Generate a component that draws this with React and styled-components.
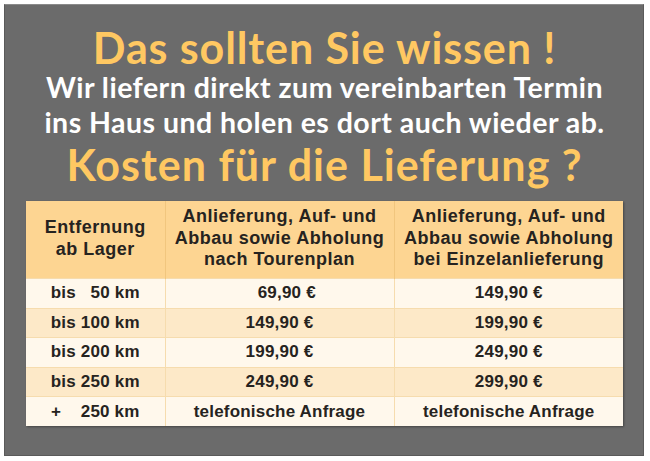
import React from "react";
import styled, { createGlobalStyle } from "styled-components";

const GlobalStyle = createGlobalStyle`
  html, body {
    margin: 0;
    padding: 0;
    background: #ffffff;
  }
`;

const Page = styled.div`
  width: 650px;
  height: 461px;
  padding: 4px 6px 5px 4px;
  box-sizing: border-box;
`;

const Panel = styled.div`
  width: 640px;
  height: 452px;
  box-sizing: border-box;
  background: #6b6b6b;
  border: 1px solid #5a5a5a;
  border-top-color: #8a8a8a;
  display: flex;
  flex-direction: column;
  align-items: center;
  padding: 20px 20px 0 21px;
`;

const Headline = styled.h1`
  margin: 0;
  font-family: Lato, "Open Sans", sans-serif;
  font-weight: 700;
  font-size: ${(p) => p.size}px;
  line-height: ${(p) => p.lh}px;
  letter-spacing: ${(p) => p.ls}px;
  color: ${(p) => (p.white ? "#ffffff" : "#ffc862")};
  text-align: center;
  white-space: nowrap;
`;

const Table = styled.table`
  margin-top: 11px;
  width: 597px;
  border-collapse: collapse;
  table-layout: fixed;
  font-family: "Liberation Sans", Arial, sans-serif;
  font-weight: 700;
  color: #262320;
  box-shadow: 1px 1px 2px rgba(0, 0, 0, 0.35);
`;

const HeadCell = styled.th`
  background: #fdd592;
  height: 75px;
  padding: 0 2px 2px;
  font-size: 18px;
  letter-spacing: 0.5px;
  line-height: 21.5px;
  font-weight: 700;
  vertical-align: middle;
  border-right: 1px solid #f1c67e;
  &:last-child {
    border-right: none;
  }
`;

const Row = styled.tr`
  background: ${(p) => (p.alt ? "#fde9c8" : "#fff8ec")};
`;

const Cell = styled.td`
  height: 28.6px;
  padding: 0 4px;
  font-size: 17px;
  line-height: 20px;
  letter-spacing: 0.2px;
  text-align: center;
  white-space: pre;
  border-top: 1px solid #f6dcae;
  border-right: 1px solid #f6dcae;
  &:last-child {
    border-right: none;
  }
`;

const rows = [
  ["bis   50 km", "\u2007 69,90 €", "149,90 €"],
  ["bis 100 km", "149,90 €", "199,90 €"],
  ["bis 200 km", "199,90 €", "249,90 €"],
  ["bis 250 km", "249,90 €", "299,90 €"],
  ["+    250 km", "telefonische Anfrage", "telefonische Anfrage"],
];

export default function App() {
  return (
    <Page>
      <GlobalStyle />
      <Panel>
        <Headline size={43} lh={45} ls={0.9}>
          Das sollten Sie wissen !
        </Headline>
        <Headline as="p" white size={28.5} lh={35} ls={0.47}>
          Wir liefern direkt zum vereinbarten Termin
        </Headline>
        <Headline as="p" white size={28.5} lh={35} ls={0.47}>
          ins Haus und holen es dort auch wieder ab.
        </Headline>
        <Headline as="h2" size={43} lh={50} ls={1}>
          Kosten für die Lieferung ?
        </Headline>
        <Table>
          <colgroup>
            <col style={{ width: 139 }} />
            <col style={{ width: 229 }} />
            <col style={{ width: 229 }} />
          </colgroup>
          <thead>
            <tr>
              <HeadCell>
                Entfernung
                <br />
                ab Lager
              </HeadCell>
              <HeadCell>
                Anlieferung, Auf- und
                <br />
                Abbau sowie Abholung
                <br />
                nach Tourenplan
              </HeadCell>
              <HeadCell>
                Anlieferung, Auf- und
                <br />
                Abbau sowie Abholung
                <br />
                bei Einzelanlieferung
              </HeadCell>
            </tr>
          </thead>
          <tbody>
            {rows.map((r, i) => (
              <Row key={i} alt={i % 2 === 1}>
                {r.map((c, j) => (
                  <Cell key={j}>{c}</Cell>
                ))}
              </Row>
            ))}
          </tbody>
        </Table>
      </Panel>
    </Page>
  );
}
